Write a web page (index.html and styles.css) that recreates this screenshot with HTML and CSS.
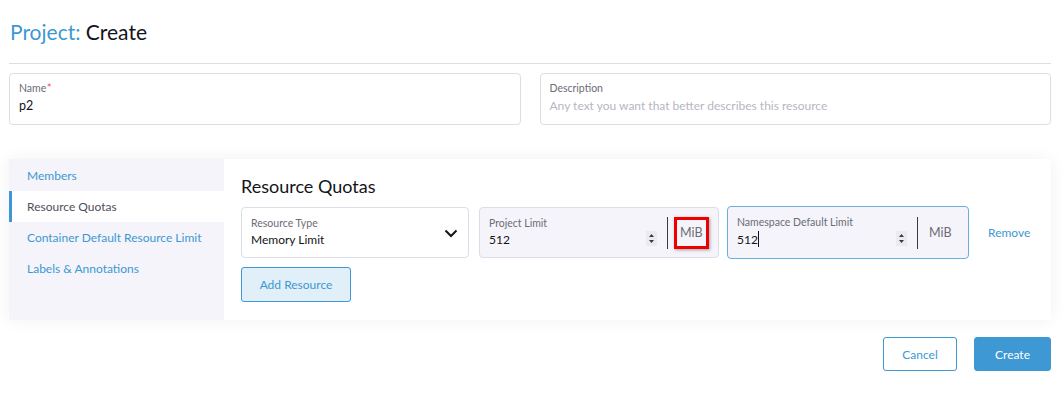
FILE: index.html
```html
<!DOCTYPE html>
<html lang="en">
    <head>
        <meta charset="UTF-8">
        <meta name="viewport" content="width=device-width, initial-scale=1.0">
        <title>Project: Create</title>
        <link rel="stylesheet" href="styles.css">
    </head>
    <body>
        <div class="clPagina">
            <!-- Cabecalho -->
            <h1 class="clTitulo"><span class="clTipo">Project:</span> Create</h1>
            <div class="clLinha"></div>

            <!-- Nome e descricao -->
            <div class="clLinhaCampos">
                <div class="clCampo">
                    <label>Name <span class="clObrigatorio">*</span></label>
                    <div class="clValor">p2</div>
                </div>
                <div class="clCampo">
                    <label>Description</label>
                    <div class="clValor clPlaceholder">Any text you want that better describes this resource</div>
                </div>
            </div>

            <!-- Abas -->
            <div class="clAbas">
                <ul class="clMenu">
                    <li>Members</li>
                    <li class="clAtiva">Resource Quotas</li>
                    <li>Container Default Resource Limit</li>
                    <li>Labels &amp; Annotations</li>
                </ul>
                <div class="clConteudo">
                    <h2 class="clSubtitulo">Resource Quotas</h2>
                    <div class="clLinhaRecurso">
                        <div class="clCaixa clSelect">
                            <div class="clTexto">
                                <label>Resource Type</label>
                                <div class="clValor">Memory Limit</div>
                            </div>
                            <svg class="clSeta" width="14" height="9" viewBox="0 0 14 9">
                                <path d="M1.5 1.5 L7 7 L12.5 1.5" fill="none" stroke="#141419" stroke-width="2"/>
                            </svg>
                        </div>
                        <div class="clCaixa clDesabilitada clLimite1">
                            <div class="clTexto">
                                <label>Project Limit</label>
                                <div class="clValor">512</div>
                            </div>
                            <svg class="clSpinner" width="11" height="15" viewBox="0 0 11 15">
                                <rect width="11" height="15" fill="#ebebef"/>
                                <path d="M3 6 L5.5 3 L8 6 Z M3 9 L5.5 12 L8 9 Z" fill="#3a3a40"/>
                            </svg>
                            <div class="clDivisor"></div>
                            <div class="clUnidade"><span class="clMarcado">MiB</span></div>
                        </div>
                        <div class="clCaixa clFoco clLimite2">
                            <div class="clTexto">
                                <label>Namespace Default Limit</label>
                                <div class="clValor">512<span class="clCursor"></span></div>
                            </div>
                            <svg class="clSpinner" width="11" height="15" viewBox="0 0 11 15">
                                <rect width="11" height="15" fill="#ebebef"/>
                                <path d="M3 6 L5.5 3 L8 6 Z M3 9 L5.5 12 L8 9 Z" fill="#3a3a40"/>
                            </svg>
                            <div class="clDivisor"></div>
                            <div class="clUnidade">MiB</div>
                        </div>
                        <a class="clRemover">Remove</a>
                    </div>
                    <button type="button" class="clBtAdicionar">Add Resource</button>
                </div>
            </div>

            <!-- Rodape -->
            <div class="clRodape">
                <button type="button" class="clBtCancelar">Cancel</button>
                <button type="button" class="clBtCriar">Create</button>
            </div>
        </div>
    </body>
</html>
```

FILE: styles.css
```css
*{
    margin: 0px;
    padding: 0px;
    box-sizing: border-box;
}
body{
    background-color: white;
    font-family: Lato, "Open Sans", sans-serif;
    color: #141419;
}
.clPagina{
    width: 1042px;
    margin-left: 9px;
    padding-top: 18px;
}
.clTitulo{
    font-size: 21px;
    font-weight: 400;
    line-height: 28px;
    padding-left: 1px;
}
.clTipo{
    color: #3d98d3;
}
.clLinha{
    height: 1px;
    background-color: #dcdee7;
    margin-top: 17px;
    margin-bottom: 9px;
}
.clLinhaCampos{
    display: flex;
    gap: 19px;
}
.clCampo{
    flex: 1;
    height: 52px;
    border: 1px solid #dcdee7;
    border-radius: 4px;
    padding: 8px 9px;
}
label{
    display: block;
    font-size: 10.5px;
    line-height: 13px;
    color: #6c6c76;
}
.clObrigatorio{
    color: #f64747;
    margin-left: -2px;
}
.clValor{
    font-size: 12.5px;
    line-height: 16px;
    margin-top: 3px;
}
.clPlaceholder{
    color: #b6b6c2;
    font-size: 12px;
}
.clAbas{
    display: flex;
    margin-top: 34px;
    height: 161px;
    box-shadow: 0 0 16px rgba(0, 0, 0, 0.06);
    background-color: white;
}
.clMenu{
    list-style: none;
    width: 215px;
    flex-shrink: 0;
    background-color: #f4f4fa;
    padding-top: 1px;
}
.clMenu li{
    height: 31px;
    line-height: 31px;
    font-size: 12px;
    color: #3d98d3;
    padding-left: 18px;
}
.clMenu .clAtiva{
    background-color: white;
    color: #50505a;
    border-left: 3px solid #3d98d3;
    padding-left: 15px;
}
.clConteudo{
    flex: 1;
    padding: 15px 20px 18px 17px;
}
.clSubtitulo{
    font-size: 18px;
    font-weight: 400;
    line-height: 24px;
    margin-bottom: 8px;
}
.clLinhaRecurso{
    display: flex;
    align-items: center;
}
.clCaixa{
    display: flex;
    align-items: center;
    flex-shrink: 0;
    height: 51px;
    border: 1px solid #dcdee7;
    border-radius: 4px;
    padding: 0px 9px;
}
.clCaixa .clTexto{
    margin-top: -1px;
}
.clCaixa .clValor{
    font-size: 12px;
    margin-top: 2px;
}
.clTexto{
    flex: 1;
}
.clSelect{
    width: 228px;
    margin-right: 10px;
}
.clSeta{
    margin-right: 1px;
    margin-top: 2px;
}
.clDesabilitada{
    background-color: #f4f4fa;
}
.clLimite1{
    width: 240px;
    margin-right: 8px;
}
.clLimite2{
    width: 242px;
    height: 53px;
}
.clFoco{
    background-color: #f4f4fa;
    border-color: #6aaee0;
}
.clSpinner{
    margin-top: 12px;
    margin-right: 10px;
}
.clDivisor{
    width: 1px;
    height: 32px;
    background-color: #3a3a40;
}
.clUnidade{
    width: 50px;
    font-size: 12.5px;
    color: #6c6c76;
    margin-right: -9px;
    padding-left: 11px;
}
.clMarcado{
    display: inline-block;
    border: 3px solid #ee0000;
    padding: 5px 3px 6px 3px;
    margin-left: -5px;
    box-shadow: 1px 1px 3px rgba(0, 0, 0, 0.35);
}
.clCursor{
    display: inline-block;
    width: 1px;
    height: 16px;
    background-color: #141419;
    vertical-align: -3px;
}
.clRemover{
    margin-left: 19px;
    font-size: 12px;
    color: #3d98d3;
}
.clBtAdicionar{
    margin-top: 8px;
    width: 110px;
    height: 35px;
    background-color: #e1eff9;
    border: 1px solid #3d98d3;
    border-radius: 3px;
    color: #3d98d3;
    font-family: Lato, sans-serif;
    font-size: 12px;
}
.clRodape{
    display: flex;
    justify-content: flex-end;
    gap: 17px;
    margin-top: 17px;
}
.clRodape button{
    height: 34px;
    border-radius: 3px;
    font-family: Lato, sans-serif;
    font-size: 12px;
    border: 1px solid #3d98d3;
}
.clBtCancelar{
    width: 74px;
    background-color: white;
    color: #3d98d3;
}
.clBtCriar{
    width: 77px;
    background-color: #3d98d3;
    color: white;
}
```
